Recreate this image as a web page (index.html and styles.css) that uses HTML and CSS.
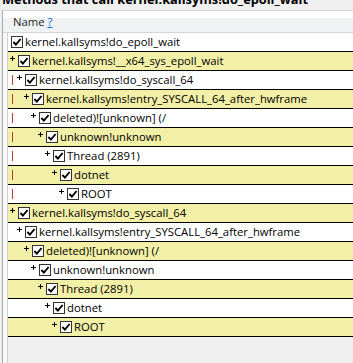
FILE: index.html
```html
<!DOCTYPE html>
<html lang="en">
<head>
  <meta charset="UTF-8">
  <title>Callers</title>
  <link rel="stylesheet" href="styles.css">
</head>
<body>
  <svg class="defs" width="0" height="0">
    <symbol id="chk" viewBox="0 0 12 12">
      <rect x="0.5" y="0.5" width="11" height="11" class="cb-box"/>
      <polyline points="2.4,6 4.9,8.6 9.6,3" class="cb-mark"/>
    </symbol>
    <symbol id="plus" viewBox="0 0 5 5">
      <path d="M0 2.5H5M2.5 0V5" stroke="#000" stroke-width="1"/>
    </symbol>
  </svg>

  <h1 class="title">Methods that call kernel.kallsyms!do_epoll_wait</h1>

  <div class="grid">
    <div class="grid-head">
      <span class="col-name">Name <a href="#">?</a></span>
    </div>
    <div class="grid-body">
      <div class="row-headers"></div>
      <div class="rows">
        <div class="row l0"><svg class="cb"><use href="#chk"/></svg><span class="name">kernel.kallsyms!do_epoll_wait</span></div>
        <div class="row alt l1"><svg class="exp"><use href="#plus"/></svg><svg class="cb"><use href="#chk"/></svg><span class="name">kernel.kallsyms!__x64_sys_epoll_wait</span></div>
        <div class="row branch l2"><svg class="exp"><use href="#plus"/></svg><svg class="cb"><use href="#chk"/></svg><span class="name">kernel.kallsyms!do_syscall_64</span></div>
        <div class="row alt branch l3"><svg class="exp"><use href="#plus"/></svg><svg class="cb"><use href="#chk"/></svg><span class="name">kernel.kallsyms!entry_SYSCALL_64_after_hwframe</span></div>
        <div class="row branch l4"><svg class="exp"><use href="#plus"/></svg><svg class="cb"><use href="#chk"/></svg><span class="name">deleted)![unknown] (/</span></div>
        <div class="row alt branch l5"><svg class="exp"><use href="#plus"/></svg><svg class="cb"><use href="#chk"/></svg><span class="name">unknown!unknown</span></div>
        <div class="row branch l6"><svg class="exp"><use href="#plus"/></svg><svg class="cb"><use href="#chk"/></svg><span class="name">Thread (2891)</span></div>
        <div class="row alt branch l7"><svg class="exp"><use href="#plus"/></svg><svg class="cb"><use href="#chk"/></svg><span class="name">dotnet</span></div>
        <div class="row branch l8"><svg class="exp"><use href="#plus"/></svg><svg class="cb off"><use href="#chk"/></svg><span class="name">ROOT</span></div>
        <div class="row alt l1"><svg class="exp"><use href="#plus"/></svg><svg class="cb"><use href="#chk"/></svg><span class="name">kernel.kallsyms!do_syscall_64</span></div>
        <div class="row l2"><svg class="exp"><use href="#plus"/></svg><svg class="cb"><use href="#chk"/></svg><span class="name">kernel.kallsyms!entry_SYSCALL_64_after_hwframe</span></div>
        <div class="row alt l3"><svg class="exp"><use href="#plus"/></svg><svg class="cb"><use href="#chk"/></svg><span class="name">deleted)![unknown] (/</span></div>
        <div class="row l4"><svg class="exp"><use href="#plus"/></svg><svg class="cb"><use href="#chk"/></svg><span class="name">unknown!unknown</span></div>
        <div class="row alt l5"><svg class="exp"><use href="#plus"/></svg><svg class="cb"><use href="#chk"/></svg><span class="name">Thread (2891)</span></div>
        <div class="row l6"><svg class="exp"><use href="#plus"/></svg><svg class="cb"><use href="#chk"/></svg><span class="name">dotnet</span></div>
        <div class="row alt l7"><svg class="exp"><use href="#plus"/></svg><svg class="cb off"><use href="#chk"/></svg><span class="name">ROOT</span></div>
      </div>
    </div>
  </div>
</body>
</html>
```

FILE: styles.css
```css
html, body {
  height: 100%;
  margin: 0;
  overflow: hidden;
}

body {
  font-family: "Open Sans", "Liberation Sans", sans-serif;
  font-size: 11.3px;
  color: #000;
  background: #f0f0f0;
  display: flex;
  flex-direction: column;
}

.defs {
  position: absolute;
}

.title {
  font-size: 12.8px;
  font-weight: bold;
  line-height: 15px;
  margin: -8px 0 3px 2px;
  white-space: nowrap;
}

.grid {
  flex: 1;
  display: flex;
  flex-direction: column;
  margin-left: 2px;
  border-left: 1px solid #a9a9a9;
  border-top: 1px solid #d9d9d9;
  background: #fff;
  min-height: 0;
}

.grid-head {
  height: 21px;
  border-bottom: 1px solid #d5d5d5;
  background: linear-gradient(#fff 0, #fff 35%, #f1f2f4 35%, #f1f2f4 100%);
  display: flex;
  align-items: center;
  padding-left: 10px;
}

.col-name {
  color: #1e1e1e;
}

.col-name a {
  color: #0066cc;
  text-decoration: underline;
}

.grid-body {
  flex: 1;
  display: flex;
  background: #efefef;
}

.row-headers {
  width: 4px;
  background: #f8f8f8;
  border-right: 1px solid #d0d0d0;
}

.rows {
  flex: 1;
}

.row {
  --lvl: 0;
  position: relative;
  height: 18px;
  border-bottom: 1px solid #000;
  background: #fff;
  display: flex;
  align-items: center;
  padding-left: calc(3px + var(--lvl) * 7px);
  white-space: nowrap;
}

.row.alt {
  background: #f2efa6;
}

.l1 { --lvl: 1; }
.l2 { --lvl: 2; }
.l3 { --lvl: 3; }
.l4 { --lvl: 4; }
.l5 { --lvl: 5; }
.l6 { --lvl: 6; }
.l7 { --lvl: 7; }
.l8 { --lvl: 8; }

/* red marker of the first expanded branch */
.row.branch::before {
  content: "";
  position: absolute;
  left: 4px;
  top: 4px;
  width: 1px;
  height: 10px;
  background: #b83a2e;
}

.exp {
  width: 5px;
  height: 5px;
  margin-left: -8px;
  margin-right: 3px;
  align-self: flex-start;
  margin-top: 4px;
}

.cb {
  width: 12px;
  height: 12px;
  flex: none;
  margin-right: 2px;
}

.cb-box {
  fill: #fff;
  stroke: #333;
  stroke-width: 1;
}

.cb-mark {
  fill: none;
  stroke: #000;
  stroke-width: 1.9;
}

.cb.off .cb-box {
  fill: #f4f4f4;
  stroke: #bcbcbc;
}

.cb.off .cb-mark {
  stroke: #a0a0a0;
}

.name {
  line-height: 18px;
}
```
